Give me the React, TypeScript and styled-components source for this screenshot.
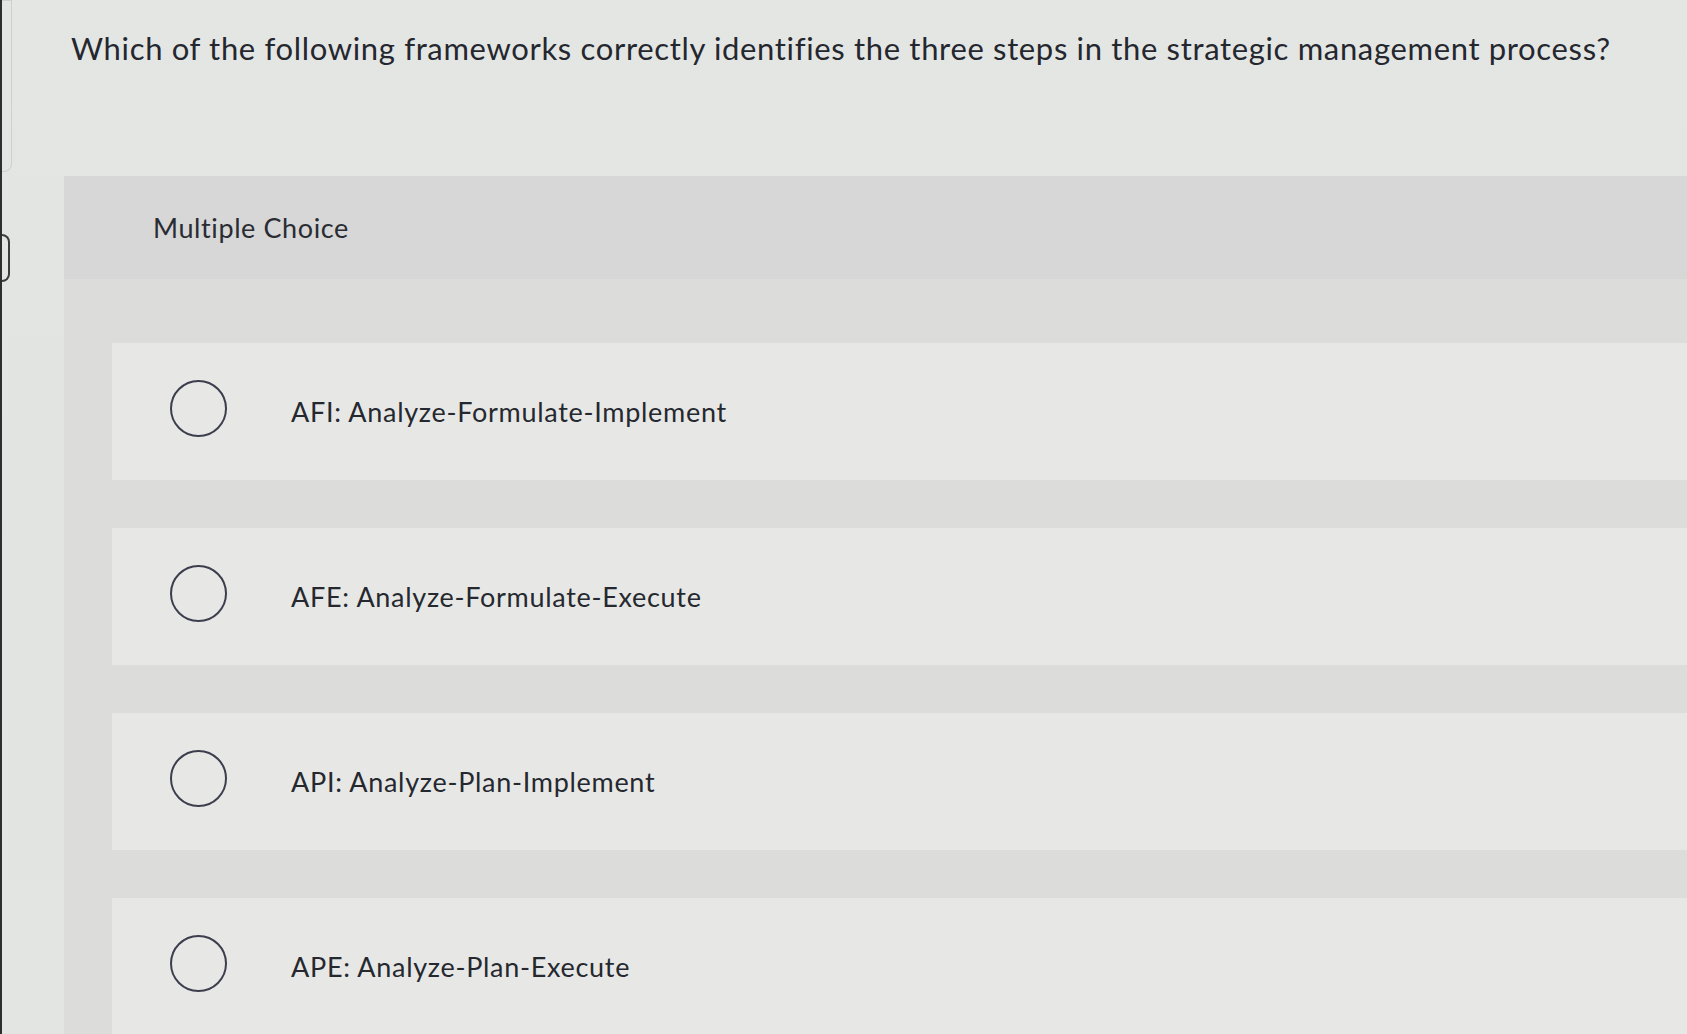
import React from "react";
import styled, { createGlobalStyle } from "styled-components";

const GlobalStyle = createGlobalStyle`
  html, body {
    margin: 0;
    padding: 0;
    background: #e2e4e2;
  }
  body {
    font-family: Lato, "Open Sans", "Liberation Sans", sans-serif;
    color: #2a2c34;
  }
`;

const Page = styled.div`
  width: 1687px;
  height: 1034px;
  overflow: hidden;
  display: flex;
  background: linear-gradient(180deg, #e4e6e4 0%, #e2e4e2 50%, #e3e5e3 100%);
  border-left: 2px solid #2c2e30;
  box-sizing: border-box;
`;

const Rail = styled.div`
  width: 10px;
  flex: none;
  display: flex;
  flex-direction: column;
  gap: 62px;
`;

const RailCard = styled.div`
  height: 170px;
  border: 1px solid #cdd0cd;
  border-left: none;
  border-radius: 0 0 8px 0;
`;

const RailTab = styled.div`
  width: 6px;
  height: 44px;
  border: 2px solid #3a3c3e;
  border-left: none;
  border-radius: 0 12px 12px 0;
`;

const Main = styled.div`
  flex: 1;
  min-width: 0;
  display: flex;
  flex-direction: column;
`;

const Question = styled.h1`
  margin: 30px 0 0 59px;
  font-size: 31px;
  font-weight: 400;
  line-height: 36px;
  color: #25272f;
  white-space: nowrap;
  letter-spacing: 0.66px;
`;

const Panel = styled.section`
  margin: 110px 0 0 52px;
  background: #dcdddb;
  display: flex;
  flex-direction: column;
  padding-bottom: 40px;
`;

const PanelHeader = styled.div`
  height: 103px;
  background: #d6d7d6;
  display: flex;
  align-items: center;
  padding-left: 89px;
  font-size: 27px;
  letter-spacing: 0.6px;
  color: #2a2c33;
`;

const Options = styled.div`
  display: flex;
  flex-direction: column;
  gap: 48px;
  padding: 64px 0 0 48px;
`;

const Option = styled.label`
  height: 137px;
  background: #e7e8e6;
  display: flex;
  align-items: center;
  padding-left: 58px;
  gap: 64px;
  cursor: pointer;
`;

const Radio = styled.span`
  width: 57px;
  height: 57px;
  flex: none;
  box-sizing: border-box;
  border: 2.5px solid #3c3e4e;
  border-radius: 50%;
  margin-top: -6px;
`;

const OptionText = styled.span`
  font-size: 27px;
  color: #26282f;
  letter-spacing: 0.7px;
`;

const options = [
  "AFI: Analyze-Formulate-Implement",
  "AFE: Analyze-Formulate-Execute",
  "API: Analyze-Plan-Implement",
  "APE: Analyze-Plan-Execute",
];

export default function App() {
  return (
    <>
      <GlobalStyle />
      <Page>
        <Rail>
          <RailCard />
          <RailTab />
        </Rail>
        <Main>
          <Question>
            Which of the following frameworks correctly identifies the three steps in the strategic management process?
          </Question>
          <Panel>
            <PanelHeader>Multiple Choice</PanelHeader>
            <Options>
              {options.map((o) => (
                <Option key={o}>
                  <Radio />
                  <OptionText>{o}</OptionText>
                </Option>
              ))}
            </Options>
          </Panel>
        </Main>
      </Page>
    </>
  );
}
